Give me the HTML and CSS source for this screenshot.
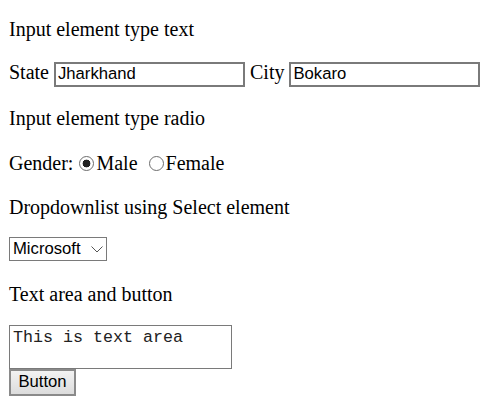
FILE: index.html
```html
<!DOCTYPE html>
<html lang="en">
<head>
  <meta charset="UTF-8" />
  <title>Form elements</title>
  <link rel="stylesheet" href="styles.css">
</head>
<body>
  <div class="page">
    <p class="label">Input element type text</p>
    <div class="row">
      State <input type="text" class="field" value="Jharkhand"> City <input type="text" class="field" value="Bokaro">
    </div>

    <p class="label">Input element type radio</p>
    <div class="row row-radio">
      Gender: <label class="choice"><input type="radio" name="gender" checked>Male</label> <label class="choice"><input type="radio" name="gender">Female</label>
    </div>

    <p class="label label-select">Dropdownlist using Select element</p>
    <div class="row row-select">
      <span class="select-wrap">
        <select class="dropdown">
          <option>Microsoft</option>
          <option>Google</option>
          <option>Apple</option>
        </select>
        <svg class="chevron" width="12" height="7" viewBox="0 0 12 7">
          <path d="M0.5 0.5 L6 6 L11.5 0.5" fill="none" stroke="#555" stroke-width="1"/>
        </svg>
      </span>
    </div>

    <p class="label label-area">Text area and button</p>
    <div class="stack">
      <textarea class="area">This is text area</textarea>
      <button class="btn">Button</button>
    </div>
  </div>
</body>
</html>
```

FILE: styles.css
```css
body {
  margin: 0;
  padding: 18px 9px;
  font-family: "Liberation Serif", "Times New Roman", serif;
  font-size: 20px;
  color: #000;
  background: #fff;
}

.page {
  display: flex;
  flex-direction: column;
  gap: 20px;
}

.label {
  margin: 0;
  line-height: 23px;
}

.label-select {
  margin-top: 1px;
}

.label-area {
  margin-top: 2px;
}

.row {
  line-height: 23px;
  white-space: nowrap;
}

.row-radio {
  margin-top: 2px;
}

.row-select {
  margin-top: -2px;
}

.field {
  box-sizing: border-box;
  width: 191px;
  height: 25px;
  margin: 0;
  padding: 0 2px;
  border: 2px solid #7a7a7a;
  font-family: "Liberation Sans", Arial, sans-serif;
  font-size: 16.67px;
  color: #000;
  vertical-align: baseline;
}

.choice input {
  appearance: none;
  box-sizing: border-box;
  width: 15px;
  height: 15px;
  margin: 0 2px 0 1px;
  border: 1px solid #6d6d6d;
  border-radius: 50%;
  background: #fff;
  vertical-align: -1px;
}

.choice input:checked {
  background: radial-gradient(circle, #222 0 3.6px, #fff 4.2px);
}

.choice + .choice input {
  margin-left: 6px;
}

.select-wrap {
  position: relative;
  display: inline-block;
  vertical-align: top;
}

.dropdown {
  appearance: none;
  display: block;
  box-sizing: border-box;
  width: 98px;
  height: 24px;
  padding: 0 0 0 3px;
  border: 1px solid #7a7a7a;
  border-radius: 0;
  background: #fff;
  font-family: "Liberation Sans", Arial, sans-serif;
  font-size: 16.67px;
  color: #000;
}

.chevron {
  position: absolute;
  right: 4px;
  top: 9px;
  pointer-events: none;
}

.stack {
  display: flex;
  flex-direction: column;
  align-items: flex-start;
  margin-top: -1px;
}

.area {
  box-sizing: border-box;
  width: 223px;
  height: 44px;
  margin: 0;
  padding: 2px 3px;
  border: 1px solid #7a7a7a;
  resize: none;
  font-family: "Liberation Mono", "Courier New", monospace;
  font-size: 16.67px;
  line-height: 19px;
  color: #222;
}

.btn {
  box-sizing: border-box;
  width: 67px;
  height: 27px;
  margin: 0;
  padding: 0;
  border: 2px solid #8a8a8a;
  border-radius: 0;
  background: linear-gradient(#f2f2f2, #dcdcdc);
  font-family: "Liberation Sans", Arial, sans-serif;
  font-size: 16.67px;
  color: #000;
}
```
